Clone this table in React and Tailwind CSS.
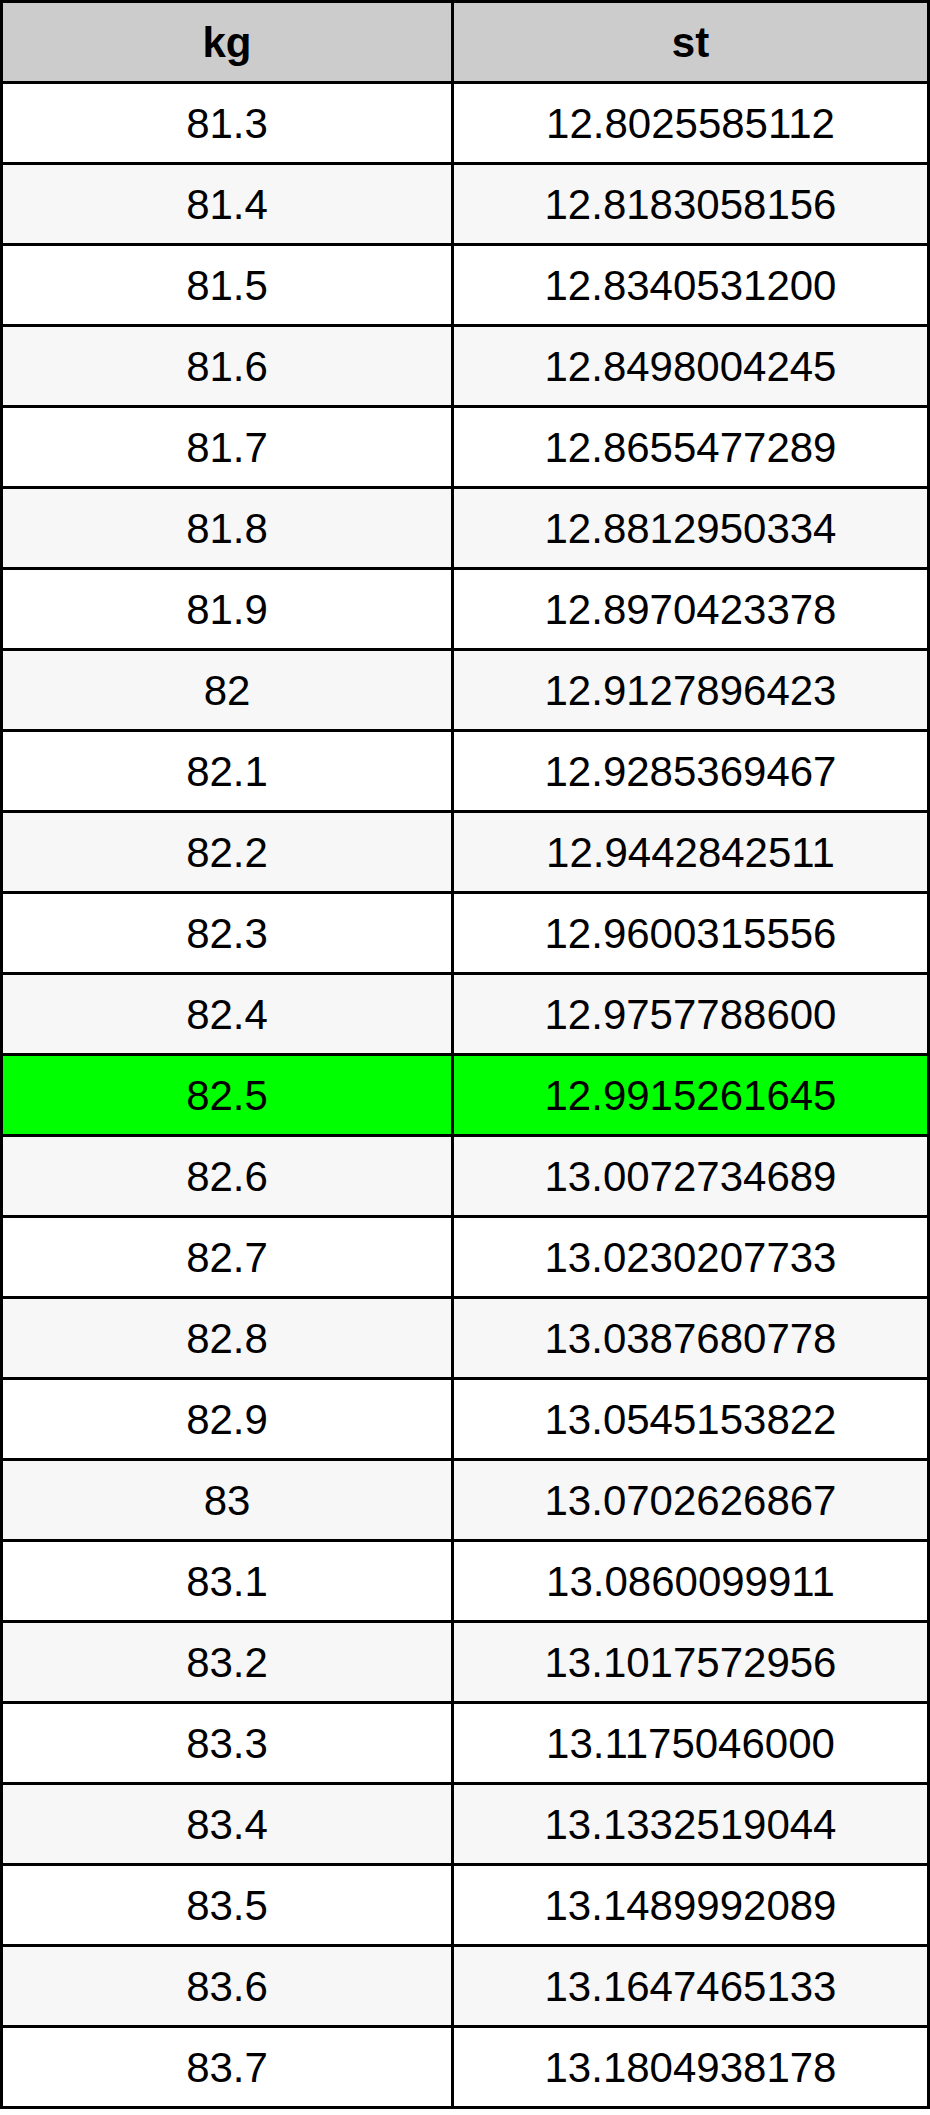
const rows = [
  ['81.3', '12.8025585112'],
  ['81.4', '12.8183058156'],
  ['81.5', '12.8340531200'],
  ['81.6', '12.8498004245'],
  ['81.7', '12.8655477289'],
  ['81.8', '12.8812950334'],
  ['81.9', '12.8970423378'],
  ['82', '12.9127896423'],
  ['82.1', '12.9285369467'],
  ['82.2', '12.9442842511'],
  ['82.3', '12.9600315556'],
  ['82.4', '12.9757788600'],
  ['82.5', '12.9915261645'],
  ['82.6', '13.0072734689'],
  ['82.7', '13.0230207733'],
  ['82.8', '13.0387680778'],
  ['82.9', '13.0545153822'],
  ['83', '13.0702626867'],
  ['83.1', '13.0860099911'],
  ['83.2', '13.1017572956'],
  ['83.3', '13.1175046000'],
  ['83.4', '13.1332519044'],
  ['83.5', '13.1489992089'],
  ['83.6', '13.1647465133'],
  ['83.7', '13.1804938178'],
]

export default function App() {
  return (
    <div className="w-[930px] bg-white font-['Liberation_Sans',Arial,sans-serif] text-[42px] text-black">
      <div className="border-[3px] border-black">
        <div className="flex h-[78px] bg-[#cccccc] font-bold">
          <div className="w-[451px] border-r-[3px] border-black flex items-center justify-center">kg</div>
          <div className="flex-1 flex items-center justify-center">st</div>
        </div>
        {rows.map(([kg, st], i) => {
          const bg = kg === '82.5' ? 'bg-[#00ff00]' : i % 2 === 1 ? 'bg-[#f7f7f7]' : 'bg-white'
          return (
            <div key={kg} className={`flex h-[81px] border-t-[3px] border-black ${bg}`}>
              <div className="w-[451px] border-r-[3px] border-black flex items-center justify-center">{kg}</div>
              <div className="flex-1 flex items-center justify-center">{st}</div>
            </div>
          )
        })}
      </div>
    </div>
  )
}
